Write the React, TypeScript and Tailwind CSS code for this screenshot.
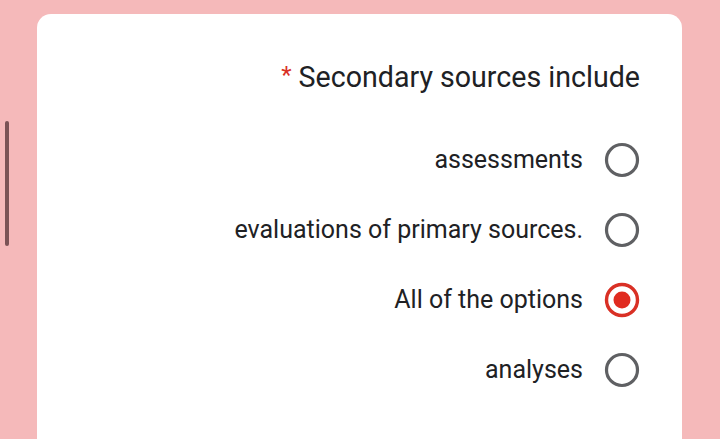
const options = [
  { label: "assessments", selected: false },
  { label: "evaluations of primary sources.", selected: false },
  { label: "All of the options", selected: true },
  { label: "analyses", selected: false },
];

const Radio = ({ selected }: { selected: boolean }) => (
  <svg width="36" height="36" viewBox="0 0 36 36" className="shrink-0">
    {selected ? (
      <>
        <circle cx="18" cy="18" r="15.5" fill="none" stroke="#d93025" strokeWidth="3.4" />
        <circle cx="18" cy="18" r="8.5" fill="#e02b20" />
      </>
    ) : (
      <circle cx="18" cy="18" r="15.5" fill="none" stroke="#5f6063" strokeWidth="3.2" />
    )}
  </svg>
);

export default function App() {
  return (
    <div
      className="relative h-[439px] w-[720px] overflow-hidden bg-[#f5b9ba]"
      style={{ fontFamily: "Roboto, 'Noto Sans', sans-serif" }}
    >
      {/* scroll indicator */}
      <div className="absolute left-[5px] top-[121px] h-[125px] w-[4px] rounded-full bg-[#7b5356]" />

      <div className="ml-[37px] mt-[14px] h-[460px] w-[645px] rounded-[14px] bg-white pr-[42px] pt-[47px]">
        <div className="flex items-start justify-end text-[28.6px] leading-[32px] text-[#202124]">
          <span className="mr-[7px] mt-[-2px] text-[24px] text-[#d93025]">*</span>
          <span>Secondary sources include</span>
        </div>

        <div className="mt-[32px] flex flex-col">
          {options.map((o) => (
            <div key={o.label} className="flex h-[70px] items-center justify-end gap-[21px]">
              <span className="text-[25px] text-[#202124]">{o.label}</span>
              <Radio selected={o.selected} />
            </div>
          ))}
        </div>
      </div>
    </div>
  );
}
